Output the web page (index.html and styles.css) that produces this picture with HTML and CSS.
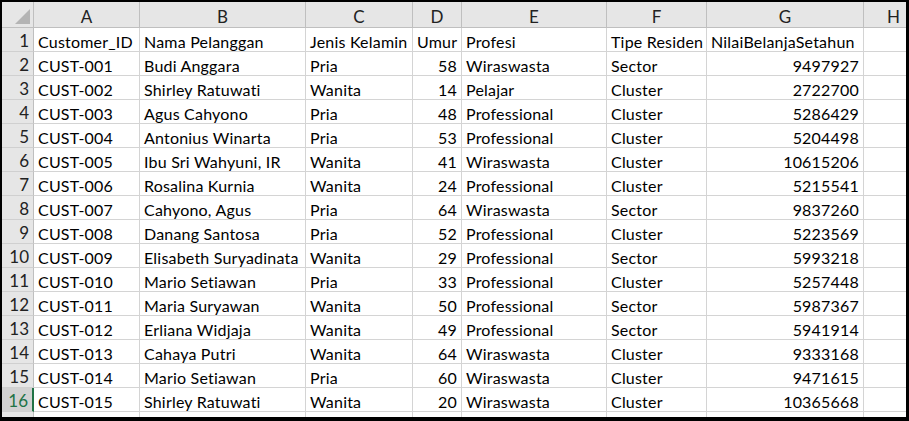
FILE: index.html
```html
<!DOCTYPE html>
<html>
<head>
<meta charset="utf-8">
<link rel="stylesheet" href="styles.css">
</head>
<body>
<div class="frame">
  <div class="sheet">
    <div class="corner"><span class="tri"></span></div>
    <div class="ch">A</div><div class="ch">B</div><div class="ch">C</div><div class="ch">D</div><div class="ch">E</div><div class="ch">F</div><div class="ch">G</div><div class="ch">H</div>

    <div class="rh">1</div><div class="c">Customer_ID</div><div class="c">Nama Pelanggan</div><div class="c">Jenis Kelamin</div><div class="c">Umur</div><div class="c">Profesi</div><div class="c">Tipe Residen</div><div class="c">NilaiBelanjaSetahun</div><div class="c"></div>
    <div class="rh">2</div><div class="c">CUST-001</div><div class="c">Budi Anggara</div><div class="c">Pria</div><div class="c n">58</div><div class="c">Wiraswasta</div><div class="c">Sector</div><div class="c n">9497927</div><div class="c"></div>
    <div class="rh">3</div><div class="c">CUST-002</div><div class="c">Shirley Ratuwati</div><div class="c">Wanita</div><div class="c n">14</div><div class="c">Pelajar</div><div class="c">Cluster</div><div class="c n">2722700</div><div class="c"></div>
    <div class="rh">4</div><div class="c">CUST-003</div><div class="c">Agus Cahyono</div><div class="c">Pria</div><div class="c n">48</div><div class="c">Professional</div><div class="c">Cluster</div><div class="c n">5286429</div><div class="c"></div>
    <div class="rh">5</div><div class="c">CUST-004</div><div class="c">Antonius Winarta</div><div class="c">Pria</div><div class="c n">53</div><div class="c">Professional</div><div class="c">Cluster</div><div class="c n">5204498</div><div class="c"></div>
    <div class="rh">6</div><div class="c">CUST-005</div><div class="c">Ibu Sri Wahyuni, IR</div><div class="c">Wanita</div><div class="c n">41</div><div class="c">Wiraswasta</div><div class="c">Cluster</div><div class="c n">10615206</div><div class="c"></div>
    <div class="rh">7</div><div class="c">CUST-006</div><div class="c">Rosalina Kurnia</div><div class="c">Wanita</div><div class="c n">24</div><div class="c">Professional</div><div class="c">Cluster</div><div class="c n">5215541</div><div class="c"></div>
    <div class="rh">8</div><div class="c">CUST-007</div><div class="c">Cahyono, Agus</div><div class="c">Pria</div><div class="c n">64</div><div class="c">Wiraswasta</div><div class="c">Sector</div><div class="c n">9837260</div><div class="c"></div>
    <div class="rh">9</div><div class="c">CUST-008</div><div class="c">Danang Santosa</div><div class="c">Pria</div><div class="c n">52</div><div class="c">Professional</div><div class="c">Cluster</div><div class="c n">5223569</div><div class="c"></div>
    <div class="rh">10</div><div class="c">CUST-009</div><div class="c">Elisabeth Suryadinata</div><div class="c">Wanita</div><div class="c n">29</div><div class="c">Professional</div><div class="c">Sector</div><div class="c n">5993218</div><div class="c"></div>
    <div class="rh">11</div><div class="c">CUST-010</div><div class="c">Mario Setiawan</div><div class="c">Pria</div><div class="c n">33</div><div class="c">Professional</div><div class="c">Cluster</div><div class="c n">5257448</div><div class="c"></div>
    <div class="rh">12</div><div class="c">CUST-011</div><div class="c">Maria Suryawan</div><div class="c">Wanita</div><div class="c n">50</div><div class="c">Professional</div><div class="c">Sector</div><div class="c n">5987367</div><div class="c"></div>
    <div class="rh">13</div><div class="c">CUST-012</div><div class="c">Erliana Widjaja</div><div class="c">Wanita</div><div class="c n">49</div><div class="c">Professional</div><div class="c">Sector</div><div class="c n">5941914</div><div class="c"></div>
    <div class="rh">14</div><div class="c">CUST-013</div><div class="c">Cahaya Putri</div><div class="c">Wanita</div><div class="c n">64</div><div class="c">Wiraswasta</div><div class="c">Cluster</div><div class="c n">9333168</div><div class="c"></div>
    <div class="rh">15</div><div class="c">CUST-014</div><div class="c">Mario Setiawan</div><div class="c">Pria</div><div class="c n">60</div><div class="c">Wiraswasta</div><div class="c">Cluster</div><div class="c n">9471615</div><div class="c"></div>
    <div class="rh sel">16</div><div class="c">CUST-015</div><div class="c">Shirley Ratuwati</div><div class="c">Wanita</div><div class="c n">20</div><div class="c">Wiraswasta</div><div class="c">Cluster</div><div class="c n">10365668</div><div class="c"></div>
    <div class="rh"></div><div class="c"></div><div class="c"></div><div class="c"></div><div class="c"></div><div class="c"></div><div class="c"></div><div class="c"></div><div class="c"></div>
  </div>
</div>
</body>
</html>
```

FILE: styles.css
```css
html, body {
  margin: 0;
  padding: 0;
  background: #ffffff;
}
.frame {
  width: 909px;
  height: 421px;
  box-sizing: border-box;
  border-style: solid;
  border-color: #000000;
  border-width: 2px 3px 4px 2px;
  overflow: hidden;
}
.sheet {
  display: grid;
  grid-template-columns: 32px 106px 166px 107px 49px 145px 100px 157px 60px;
  grid-template-rows: 26px repeat(17, 24px);
  font-family: Lato, "Liberation Sans", sans-serif;
  font-size: 16px;
  letter-spacing: 0.2px;
  line-height: 18px;
  color: #000000;
}
.corner {
  background: #e6e6e6;
  border-right: 1px solid #bfbfbf;
  border-bottom: 1px solid #bfbfbf;
  box-sizing: border-box;
  position: relative;
}
.tri {
  position: absolute;
  right: 3px;
  bottom: 3px;
  width: 0;
  height: 0;
  border-style: solid;
  border-width: 0 0 15px 15px;
  border-color: transparent transparent #b4b4b4 transparent;
}
.ch {
  background: #e6e6e6;
  border-right: 1px solid #bfbfbf;
  border-bottom: 1px solid #bfbfbf;
  box-sizing: border-box;
  display: flex;
  align-items: flex-end;
  justify-content: center;
  padding-bottom: 1px;
  color: #222222;
  font-size: 17px;
  letter-spacing: 0;
}
.rh {
  background: #e6e6e6;
  border-right: 1px solid #bfbfbf;
  border-bottom: 1px solid #d0d0d0;
  box-sizing: border-box;
  display: flex;
  align-items: flex-end;
  justify-content: flex-end;
  padding: 0 4px 1px 0;
  color: #222222;
  font-size: 17px;
  letter-spacing: 0;
}
.rh.sel {
  background: #d2d2d2;
  color: #217346;
  border-right: 2px solid #217346;
}
.c {
  border-right: 1px solid #d4d4d4;
  border-bottom: 1px solid #d4d4d4;
  box-sizing: border-box;
  display: flex;
  align-items: flex-end;
  padding: 0 2px 0 4px;
  white-space: nowrap;
  overflow: hidden;
}
.c.n {
  justify-content: flex-end;
  padding-right: 4px;
}
```
